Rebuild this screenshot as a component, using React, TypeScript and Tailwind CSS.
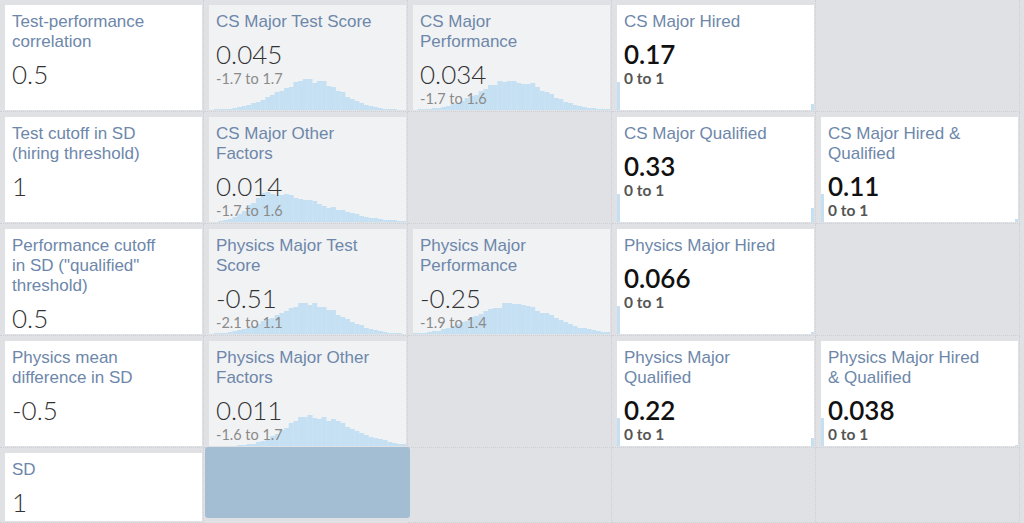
import React from "react"

type Cell =
  | { kind: "input"; label: string; value: string }
  | { kind: "dist"; label: string; value: string; range: string; shape: [number, number, number, number] }
  | { kind: "output"; label: string; value: string; p: number }
  | { kind: "empty" }
  | { kind: "selected" }

const cells: Cell[] = [
  { kind: "input", label: "Test-performance correlation", value: "0.5" },
  { kind: "dist", label: "CS Major Test Score", value: "0.045", range: "-1.7 to 1.7", shape: [0.52, 0.17, 0.15, 1] },
  { kind: "dist", label: "CS Major Performance", value: "0.034", range: "-1.7 to 1.6", shape: [0.51, 0.17, 0.17, 2] },
  { kind: "output", label: "CS Major Hired", value: "0.17", p: 0.17 },
  { kind: "empty" },

  { kind: "input", label: "Test cutoff in SD (hiring threshold)", value: "1" },
  { kind: "dist", label: "CS Major Other Factors", value: "0.014", range: "-1.7 to 1.6", shape: [0.3, 0.09, 0.27, 3] },
  { kind: "empty" },
  { kind: "output", label: "CS Major Qualified", value: "0.33", p: 0.33 },
  { kind: "output", label: "CS Major Hired & Qualified", value: "0.11", p: 0.11 },

  { kind: "input", label: 'Performance cutoff in SD ("qualified" threshold)', value: "0.5" },
  { kind: "dist", label: "Physics Major Test Score", value: "-0.51", range: "-2.1 to 1.1", shape: [0.5, 0.17, 0.17, 4] },
  { kind: "dist", label: "Physics Major Performance", value: "-0.25", range: "-1.9 to 1.4", shape: [0.5, 0.18, 0.2, 5] },
  { kind: "output", label: "Physics Major Hired", value: "0.066", p: 0.066 },
  { kind: "empty" },

  { kind: "input", label: "Physics mean difference in SD", value: "-0.5" },
  { kind: "dist", label: "Physics Major Other Factors", value: "0.011", range: "-1.6 to 1.7", shape: [0.52, 0.13, 0.2, 6] },
  { kind: "empty" },
  { kind: "output", label: "Physics Major Qualified", value: "0.22", p: 0.22 },
  { kind: "output", label: "Physics Major Hired & Qualified", value: "0.038", p: 0.038 },

  { kind: "input", label: "SD", value: "1" },
  { kind: "selected" },
  { kind: "empty" },
  { kind: "empty" },
  { kind: "empty" },
]

// bumpy, slightly skewed bell curve
function bins(mu: number, sl: number, sr: number, seed: number) {
  const n = 42
  const out: number[] = []
  for (let i = 0; i < n; i++) {
    const x = (i + 0.5) / n
    const s = x < mu ? sl : sr
    const g = Math.exp(-0.5 * ((x - mu) / s) ** 2)
    const noise = Math.sin(i * 12.9898 + seed * 78.233) * 43758.5453
    const r = noise - Math.floor(noise)
    out.push(Math.round(30 * g * (0.9 + 0.16 * r)))
  }
  return out
}

function Histogram({ shape }: { shape: [number, number, number, number] }) {
  const hs = bins(...shape)
  const w = 200 / hs.length
  return (
    <svg className="absolute bottom-0 left-0 w-full h-[32px]" viewBox="0 0 200 32" preserveAspectRatio="none">
      {hs.map((h, i) => (
        <rect key={i} x={i * w} y={32 - h} width={w + 0.3} height={h} fill="#c6e0f3" />
      ))}
    </svg>
  )
}

function Label({ text }: { text: string }) {
  return <div className="w-[156px] text-[17px] leading-[20px] text-[#6d87aa] font-['Liberation_Sans',Arial,sans-serif]">{text}</div>
}

function CellView({ cell }: { cell: Cell }) {
  if (cell.kind === "empty") return <div className="border-r border-b border-dotted border-[#cdd0d5]" />
  if (cell.kind === "selected")
    return (
      <div className="pl-[1px] -mr-[2px] -mt-[1px] pb-[5px]">
        <div className="h-full rounded-[3px] bg-[#a3bed3]" />
      </div>
    )

  const bg = cell.kind === "dist" ? "bg-[#f1f2f4]" : "bg-white"
  return (
    <div className="pl-[5px] pt-[5px] pr-[1px] pb-[1px] border-r border-b border-dotted border-[#cdd0d5]">
      <div className={`relative h-full overflow-hidden ${bg} px-[7px] pt-[7px]`}>
        {cell.kind === "dist" && <Histogram shape={cell.shape} />}
        {cell.kind === "output" && (
          <>
            <div className="absolute left-0 bottom-0 w-[3px] h-[28px] bg-[#c6e0f3]" />
            <div
              className="absolute right-0 bottom-0 w-[3px] bg-[#c6e0f3]"
              style={{ height: `${(28 * cell.p) / (1 - cell.p)}px` }}
            />
          </>
        )}
        <div className="relative font-['Lato',sans-serif]">
          <Label text={cell.label} />
          {cell.kind === "output" ? (
            <>
              <div className="mt-2 text-[26px] leading-[28px] font-semibold text-[#111]">{cell.value}</div>
              <div className="mt-[2px] text-[15.5px] leading-4 font-bold text-[#555]">0 to 1</div>
            </>
          ) : (
            <>
              <div className="mt-2 text-[26px] leading-[28px] font-light text-[#333]">{cell.value}</div>
              {cell.kind === "dist" && <div className="mt-[3px] text-[14.5px] leading-4 text-[#8a8a8a]">{cell.range}</div>}
            </>
          )}
        </div>
      </div>
    </div>
  )
}

export default function App() {
  return (
    <div className="w-[1024px] h-[523px] overflow-hidden bg-[#e0e1e5] grid grid-cols-[repeat(5,204px)] grid-rows-[112px_112px_112px_112px_75px]">
      {cells.map((c, i) => (
        <CellView key={i} cell={c} />
      ))}
    </div>
  )
}
